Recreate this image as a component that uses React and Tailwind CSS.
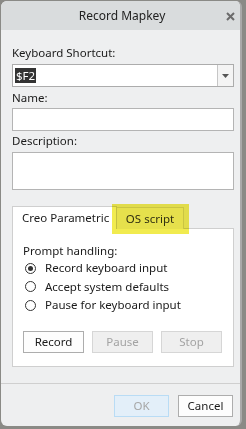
import React from "react";

const font = { fontFamily: '"Noto Sans", "Open Sans", sans-serif' };

function Radio({ checked, label }) {
  return (
    <div className="flex items-center h-[18.5px]">
      <div className="ml-[2px] w-[11px] h-[11px] rounded-full border border-[#333333] bg-white flex items-center justify-center">
        {checked && <div className="w-[5px] h-[5px] rounded-full bg-[#333333]" />}
      </div>
      <span className="ml-[9px] text-[11.5px] leading-[16px] text-[#1a1a1a]">{label}</span>
    </div>
  );
}

export default function App() {
  return (
    <div className="w-[246px] h-[429px] bg-[#8a8a86] overflow-hidden" style={font}>
      <div className="ml-[1px] mt-[1px] w-[241px] h-[425px] rounded-[6px] bg-[#eeeff0] overflow-hidden flex flex-col border-r-[2px] border-[#a9a9a9]">
        {/* Title bar */}
        <div className="relative h-[29px] bg-[#d9dcdd] flex items-center justify-center shrink-0">
          <span className="text-[12px] text-[#222222] pl-[3px]">Record Mapkey</span>
          <svg className="absolute left-[225px] top-[11px]" width="9" height="9" viewBox="0 0 9 9">
            <path d="M1 1 L8 8 M8 1 L1 8" stroke="#6b6b6b" strokeWidth="2" />
          </svg>
        </div>

        <div className="pl-[11px] flex flex-col">
          <div className="mt-[15px] h-[16px] text-[11.5px] leading-[16px] text-[#1a1a1a]">Keyboard Shortcut:</div>
          <div className="mt-[3px] w-[222px] h-[23px] border border-[#acacac] bg-white flex">
            <div className="flex-1 flex items-center pl-[2px]">
              <span className="bg-[#333333] text-white text-[11.5px] leading-[15px] px-[1px]">$F2</span>
            </div>
            <div className="w-[16px] border-l border-[#c6c6c6] bg-[#f4f4f4] flex items-center justify-center">
              <svg width="7" height="4" viewBox="0 0 7 4">
                <path d="M0 0 L7 0 L3.5 4 Z" fill="#555555" />
              </svg>
            </div>
          </div>

          <div className="mt-[3px] h-[16px] text-[11.5px] leading-[16px] text-[#1a1a1a]">Name:</div>
          <div className="mt-[2px] w-[222px] h-[23px] border border-[#b4b4b4] bg-white" />

          <div className="mt-[2px] h-[16px] text-[11.5px] leading-[16px] text-[#1a1a1a]">Description:</div>
          <div className="mt-[3px] w-[222px] h-[38px] border border-[#b4b4b4] bg-white" />

          {/* Tabs */}
          <div className="mt-[16px] w-[222px] relative">
            <div className="flex items-end h-[23px]">
              <div className="h-[23px] w-[105px] border border-b-0 border-[#cfcfcf] bg-white flex items-center pl-[9px] text-[11.5px] text-[#1a1a1a] relative z-10 whitespace-nowrap">
                Creo Parametric
              </div>
              <div className="h-[22px] w-[67px] border border-l-0 border-b-0 border-[#d6d6d6] bg-[#f4f4f4] flex items-center justify-center text-[11.5px] text-[#333333] whitespace-nowrap">
                OS script
              </div>
            </div>
            <div className="absolute left-[100px] top-[-2px] w-[77px] h-[30px] bg-[#f1eb4f] mix-blend-multiply z-20" />
            <div className="-mt-[1px] h-[139px] border border-[#cfcfcf] bg-white pl-[10px] flex flex-col">
              <div className="mt-[14px] h-[16px] text-[11.5px] leading-[16px] text-[#1a1a1a]">Prompt handling:</div>
              <Radio checked label="Record keyboard input" />
              <Radio label="Accept system defaults" />
              <Radio label="Pause for keyboard input" />
              <div className="mt-[16px] flex gap-[8px]">
                <div className="w-[61px] h-[22px] border border-[#adadad] bg-[#fdfdfd] flex items-center justify-center text-[11.5px] text-[#1a1a1a]">Record</div>
                <div className="w-[61px] h-[22px] border border-[#d6d6d6] bg-[#efefef] flex items-center justify-center text-[11.5px] text-[#a3a3a3]">Pause</div>
                <div className="w-[61px] h-[22px] border border-[#d6d6d6] bg-[#efefef] flex items-center justify-center text-[11.5px] text-[#a3a3a3]">Stop</div>
              </div>
            </div>
          </div>
        </div>

        <div className="mt-[16px] h-[1px] bg-[#cfcfcf]" />

        <div className="mt-[11px] flex pl-[113px] gap-[9px]">
          <div className="w-[55px] h-[22px] border border-[#b9dcf5] bg-[#e3eff9] flex items-center justify-center text-[11.5px] text-[#a6a6a6]">OK</div>
          <div className="w-[55px] h-[22px] border border-[#adadad] bg-[#fdfdfd] flex items-center justify-center text-[11.5px] text-[#1a1a1a]">Cancel</div>
        </div>
      </div>
    </div>
  );
}
